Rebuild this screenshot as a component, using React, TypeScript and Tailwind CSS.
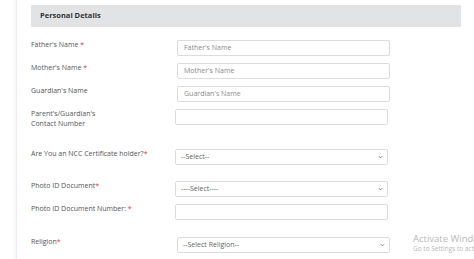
import React from "react";

const font = { fontFamily: '"Open Sans", "Liberation Sans", sans-serif' };

function Label({ text, req }: { text: React.ReactNode; req?: boolean }) {
  return (
    <div className="w-[144px] shrink-0 text-[7px] leading-[10px] text-[#555]">
      {text}
      {req && <span className="text-[#d0413b]">*</span>}
    </div>
  );
}

function Input({ ph, off }: { ph?: string; off?: boolean }) {
  return (
    <div
      className={`h-[16px] w-[213px] border border-[#dcdcdc] rounded-[2px] bg-white flex items-center pl-[6px] text-[7px] text-[#8a8a8a] ${off ? "" : "ml-[2px]"}`}
    >
      {ph}
    </div>
  );
}

function Select({ text, off }: { text: string; off?: boolean }) {
  return (
    <div
      className={`h-[16px] w-[213px] border border-[#dcdcdc] rounded-[2px] bg-white flex items-center justify-between pl-[5px] pr-[4px] text-[7px] text-[#666] ${off ? "" : "ml-[2px]"}`}
    >
      <span>{text}</span>
      <svg width="5" height="4" viewBox="0 0 6 4">
        <path d="M1 1 L3 3 L5 1" stroke="#777" strokeWidth="1.1" fill="none" />
      </svg>
    </div>
  );
}

export default function App() {
  return (
    <div className="w-[474px] h-[259px] bg-white overflow-hidden relative" style={font}>
      <div className="ml-[16px] h-full border-l border-[#ececec] shadow-[-2px_0_3px_rgba(0,0,0,0.04)] pl-[14px] pt-[5px]">
        <div className="w-[430px] h-[22px] bg-[#e2e3e5] flex items-center pl-[9px] text-[7.5px] font-bold text-[#333]">
          Personal Details
        </div>
        <div className="flex flex-col">
          <div className="flex items-start mt-[13px]">
            <Label text="Father's Name " req />
            <Input ph="Father's Name" />
          </div>
          <div className="flex items-start mt-[7px]">
            <Label text="Mother's Name " req />
            <Input ph="Mother's Name" />
          </div>
          <div className="flex items-start mt-[7px]">
            <Label text="Guardian's Name" />
            <Input ph="Guardian's Name" />
          </div>
          <div className="flex items-start mt-[7px]">
            <Label text={<>Parent's/Guardian's<br />Contact Number</>} />
            <Input off />
          </div>
          <div className="flex items-start mt-[20px]">
            <Label text="Are You an NCC Certificate holder?" req />
            <Select text="--Select--" off />
          </div>
          <div className="flex items-start mt-[16px]">
            <Label text="Photo ID Document" req />
            <Select text="----Select----" off />
          </div>
          <div className="flex items-start mt-[7px]">
            <Label text="Photo ID Document Number: " req />
            <Input off />
          </div>
          <div className="flex items-start mt-[17px]">
            <Label text="Religion" req />
            <Select text="--Select Religion--" />
          </div>
          <div className="flex items-start mt-[6px]">
            <Label text="" />
            <Input />
          </div>
        </div>
      </div>
      <div className="absolute left-[413px] top-[233px] text-[#b8b8b8] whitespace-nowrap">
        <div className="text-[9.5px] leading-[11px]">Activate Windows</div>
        <div className="text-[6.5px] leading-[9px]">Go to Settings to activate Windows.</div>
      </div>
    </div>
  );
}
